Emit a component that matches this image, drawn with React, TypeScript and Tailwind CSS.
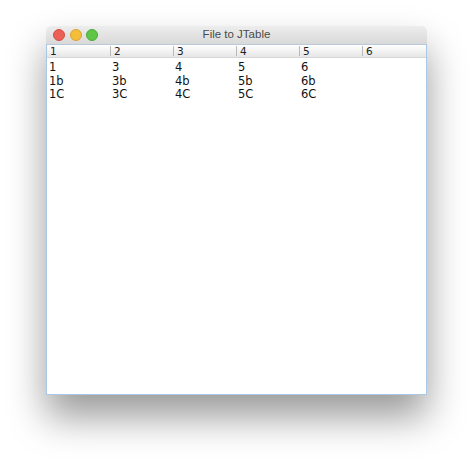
import React, { FC } from "react";

const headers = ["1", "2", "3", "4", "5", "6"];

const rows: string[][] = [
    ["1", "3", "4", "5", "6", ""],
    ["1b", "3b", "4b", "5b", "6b", ""],
    ["1C", "3C", "4C", "5C", "6C", ""],
];

const TrafficLights: FC = () => {
    return (
        <div className="flex items-center gap-[4.5px]">
            <span className="w-[12px] h-[12px] rounded-full bg-[#ec5f57] border border-[#d44c45]" />
            <span className="w-[12px] h-[12px] rounded-full bg-[#f4be3a] border border-[#d9a32c]" />
            <span className="w-[12px] h-[12px] rounded-full bg-[#5fc648] border border-[#4aab36]" />
        </div>
    );
}

const TableHeader: FC = () => {
    return (
        <div className="flex h-[13px] bg-gradient-to-b from-white to-[#e6e6e6] border-b border-[#d6d6d6]">
            {headers.map((h, i) => (
                <div key={i} className="w-[63px] shrink-0 flex items-center">
                    {i > 0 && <span className="w-px h-[10px] bg-[#b9b9b9]" />}
                    <span className="pl-[3px] pt-[1px] text-[10.5px] text-[#222]">{h}</span>
                </div>
            ))}
        </div>
    );
}

const TableBody: FC = () => {
    return (
        <div className="flex flex-col pt-[3px]">
            {rows.map((row, r) => (
                <div key={r} className="flex h-[13.5px]">
                    {row.map((cell, c) => (
                        <div key={c} className="w-[63px] shrink-0 flex items-center pl-[2px] text-[11.5px] text-[#111]">
                            {cell}
                        </div>
                    ))}
                </div>
            ))}
        </div>
    );
}

const App: FC = () => {
    return (
        <div className="w-[474px] h-[463px] bg-white pl-[46px] pt-[26px]" style={{ fontFamily: '"DejaVu Sans", sans-serif' }}>
            <div className="w-[381px] h-[369px] flex flex-col rounded-t-[5px] shadow-[0_22px_38px_rgba(0,0,0,0.4)]">
                <div className="relative h-[19px] flex items-center pl-[7px] rounded-t-[5px] bg-gradient-to-b from-[#ededed] to-[#d9d9d9] border-b border-[#b8c9dc]">
                    <TrafficLights />
                    <div
                        className="absolute inset-0 flex items-center justify-center text-[11.5px] text-[#4a4a4a]"
                        style={{ fontFamily: '"Liberation Sans", sans-serif' }}
                    >
                        File to JTable
                    </div>
                </div>
                <div className="flex-1 bg-white border-x border-b border-[#a9c8e6] overflow-hidden">
                    <TableHeader />
                    <TableBody />
                </div>
            </div>
        </div>
    );
}

export default App;
